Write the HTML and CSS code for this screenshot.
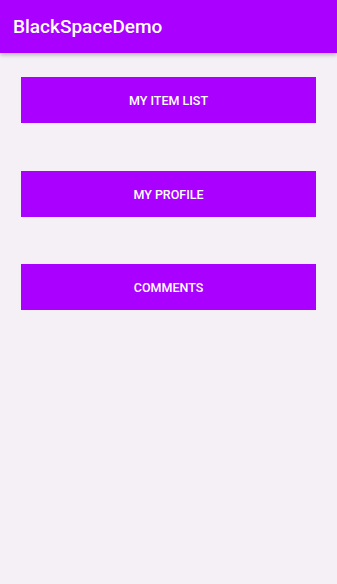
FILE: index.html
```html
<!DOCTYPE html>
<html lang="en">
<head>
  <meta charset="UTF-8">
  <meta name="viewport" content="width=device-width, initial-scale=1">
  <title>BlackSpaceDemo</title>
  <link rel="stylesheet" href="styles.css">
</head>
<body>

  <header class="app-bar">
    <h1 class="app-title">BlackSpaceDemo</h1>
  </header>

  <main class="menu">
    <button class="menu-button">My Item List</button>
    <button class="menu-button">My Profile</button>
    <button class="menu-button">Comments</button>
  </main>

</body>
</html>
```

FILE: styles.css
```css
* {
  margin: 0;
  padding: 0;
  box-sizing: border-box;
}
body {
  background: #f4f0f5;
  font-family: Roboto, "Noto Sans", sans-serif;
  height: 584px;
}
.app-bar {
  height: 53px;
  background: #aa00ff;
  display: flex;
  align-items: center;
  padding-left: 13px;
  box-shadow: 0 2px 4px rgba(0,0,0,0.25);
  position: relative;
}
.app-title {
  color: #fff;
  font-size: 19px;
  font-weight: 500;
}
.menu {
  display: flex;
  flex-direction: column;
  gap: 48px;
  padding: 24px 21px 0 21px;
}
.menu-button {
  height: 46px;
  width: 295px;
  border: none;
  background: #aa00ff;
  color: #fff;
  font-family: Roboto, "Noto Sans", sans-serif;
  font-size: 12.5px;
  font-weight: 500;
  text-transform: uppercase;
}
.menu-button:last-child {
  margin-top: -1px;
}
```
